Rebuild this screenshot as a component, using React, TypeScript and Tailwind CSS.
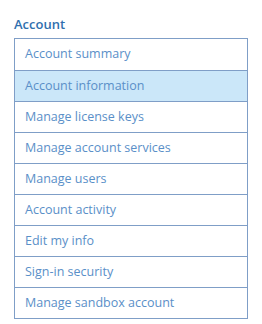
const items = [
  'Account summary',
  'Account information',
  'Manage license keys',
  'Manage account services',
  'Manage users',
  'Account activity',
  'Edit my info',
  'Sign-in security',
  'Manage sandbox account',
]

export default function App() {
  return (
    <div className="min-h-screen bg-white px-[14px] pt-[16px] font-['Open_Sans',sans-serif]">
      <h2 className="text-[13px] font-semibold leading-4 text-[#2f6fae]">Account</h2>
      <ul className="mt-[6px] w-[234px] border border-[#7f9ec7]">
        {items.map((item, i) => (
          <li
            key={item}
            className={`flex h-[31px] items-center px-[10px] text-[12.5px] text-[#5a8fc8] ${
              i > 0 ? 'border-t border-[#7f9ec7]' : ''
            } ${i === 1 ? 'bg-[#cbe7f9]' : ''}`}
          >
            {item}
          </li>
        ))}
      </ul>
    </div>
  )
}
